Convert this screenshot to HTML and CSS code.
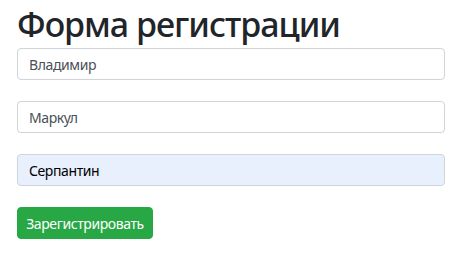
FILE: index.html
```html
<!DOCTYPE html>
<html lang="ru">
<head>
<meta charset="utf-8">
<title>Форма регистрации</title>
<link rel="stylesheet" href="styles.css">
</head>
<body>
<div class="container">
  <h1 class="title">Форма регистрации</h1>
  <form class="form">
    <input class="field" type="text" value="Владимир">
    <input class="field" type="text" value="Маркул">
    <input class="field autofill" type="text" value="Серпантин">
    <div><button class="btn" type="button">Зарегистрировать</button></div>
  </form>
</div>
</body>
</html>
```

FILE: styles.css
```css
html, body {
  margin: 0;
  padding: 0;
  background: #fff;
}
body {
  font-family: "Noto Sans", "Open Sans", sans-serif;
  color: #212529;
}
.container {
  width: 428px;
  padding: 0 17px;
}
.title {
  margin: 0;
  height: 48px;
  font-size: 34px;
  font-weight: 500;
  line-height: 48px;
  color: #212529;
  letter-spacing: -1px;
}
.form {
  display: flex;
  flex-direction: column;
  gap: 21px;
}
.field {
  box-sizing: border-box;
  width: 428px;
  height: 32px;
  margin: 0;
  padding: 0 11px;
  border: 1px solid #ced4da;
  border-radius: 4px;
  font-family: inherit;
  font-size: 14px;
  letter-spacing: -0.4px;
  color: #495057;
  background: #fff;
  outline: none;
}
.field.autofill {
  background: #e8f0fe;
  color: #000;
}
.btn {
  box-sizing: border-box;
  height: 32px;
  width: 136px;
  padding: 0;
  border: 1px solid #28a745;
  border-radius: 4px;
  background: #28a745;
  color: #fff;
  font-family: inherit;
  font-size: 14px;
  letter-spacing: -0.4px;
  cursor: pointer;
}
```
